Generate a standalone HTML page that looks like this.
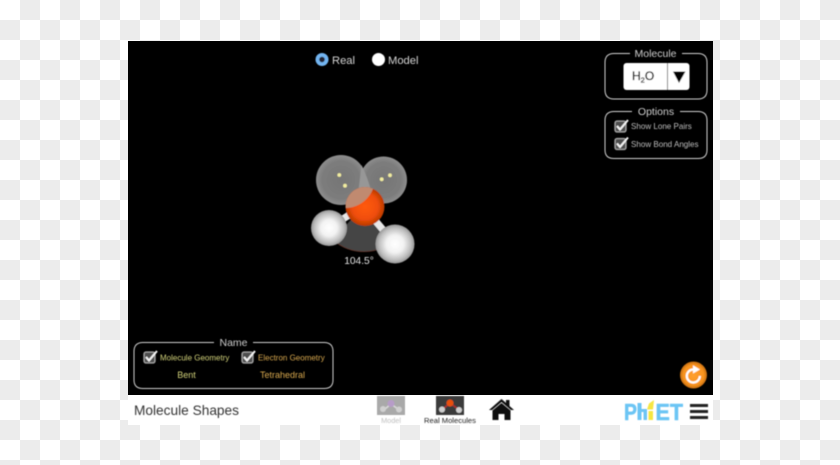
<!DOCTYPE html>
<html><head><meta charset="utf-8">
<style>
html,body{margin:0;padding:0;width:840px;height:465px;overflow:hidden;background:#fff}
svg{display:block;position:absolute;left:0;top:0}
text{font-family:"Liberation Sans",sans-serif}
</style></head>
<body>
<svg width="840" height="465" viewBox="0 0 840 465" xmlns="http://www.w3.org/2000/svg">
<defs>
<pattern id="ck" width="40" height="40" patternUnits="userSpaceOnUse">
<rect width="40" height="40" fill="#fff"/>
<rect x="20" y="0" width="20" height="20" fill="#ececec"/>
<rect x="0" y="20" width="20" height="20" fill="#ececec"/>
</pattern>
<filter id="b" x="-5%" y="-5%" width="110%" height="110%"><feGaussianBlur stdDeviation="0.45"/></filter>
<radialGradient id="h" cx="50%" cy="50%" r="50%"><stop offset="0" stop-color="#fff"/><stop offset=".45" stop-color="#f2f2f2"/><stop offset=".82" stop-color="#bdbdbd"/><stop offset="1" stop-color="#969696"/></radialGradient>
<radialGradient id="o" cx="50%" cy="50%" r="50%"><stop offset="0" stop-color="#ff5a0a"/><stop offset=".65" stop-color="#f04e08"/><stop offset="1" stop-color="#b83a04"/></radialGradient>
<radialGradient id="lp" cx="50%" cy="50%" r="50%"><stop offset="0" stop-color="#767676"/><stop offset=".75" stop-color="#7c7c7c"/><stop offset="1" stop-color="#8e8e8e"/></radialGradient>
<radialGradient id="re" cx="50%" cy="50%" r="50%"><stop offset="0" stop-color="#ffa030"/><stop offset=".75" stop-color="#f7931e"/><stop offset="1" stop-color="#c46c10"/></radialGradient>
<clipPath id="tan"><circle cx="345" cy="178" r="30"/></clipPath>
</defs>
<rect width="840" height="465" fill="url(#ck)"/>
<rect x="128" y="41" width="585" height="354" fill="#000"/>
<rect x="128" y="395" width="585" height="30" fill="#fff"/>
<g filter="url(#b)">
<!-- radio -->
<circle cx="322" cy="59.5" r="6.5" fill="#72b4f0"/><circle cx="322" cy="59.5" r="2.8" fill="#223"/>
<text x="332" y="64" font-size="11.2" fill="#d6d6d6">Real</text>
<circle cx="378.5" cy="59.5" r="6.5" fill="#fff"/>
<text x="388" y="64" font-size="11.2" fill="#d6d6d6">Model</text>

<!-- molecule -->
<path d="M363 206 L333 240 A47 47 0 0 0 395 240 Z" fill="#454545"/>
<path d="M333 240 A47 47 0 0 0 395 240" fill="none" stroke="#6a3528" stroke-width=".7"/>
<circle cx="383.500" cy="180" r="23.500" fill="url(#lp)"/>
<circle cx="341" cy="180" r="25" fill="url(#lp)"/>
<path d="M361.500 165 Q360 178 358 194 L372 194 Q368 178 361.500 165Z" fill="#979797"/>
<line x1="363" y1="206" x2="329" y2="228" stroke="#e8e8e8" stroke-width="7"/>
<line x1="363" y1="206" x2="395" y2="244" stroke="#e8e8e8" stroke-width="7"/>
<circle cx="329" cy="228" r="18" fill="url(#h)"/>
<circle cx="395" cy="244" r="19.500" fill="url(#h)"/>
<circle cx="365" cy="206.500" r="19.500" fill="url(#o)"/>
<circle cx="365" cy="206.500" r="19.500" fill="#c08a70" clip-path="url(#tan)"/>
<circle cx="339.300" cy="175" r="1.900" fill="#f2eda0"/>
<circle cx="345" cy="185.700" r="1.900" fill="#f2eda0"/>
<circle cx="381.700" cy="179.300" r="1.900" fill="#f2eda0"/>
<circle cx="390" cy="175.300" r="1.900" fill="#f2eda0"/>
<text x="359" y="264" font-size="10.200" fill="#e4e4e4" text-anchor="middle">104.5°</text>

<!-- Molecule panel -->
<path d="M630 53.500 H614 Q605 53.500 605 62.500 V90 Q605 99 614 99 H698 Q707 99 707 90 V62.500 Q707 53.500 698 53.500 H682" fill="none" stroke="#d0d0d0" stroke-width="1"/>
<text x="655.500" y="57" font-size="10.500" fill="#cfcfcf" text-anchor="middle">Molecule</text>
<rect x="623.500" y="63" width="66" height="27" rx="3" fill="#fff"/>
<line x1="667.500" y1="63" x2="667.500" y2="90" stroke="#777" stroke-width="1"/>
<text x="632" y="80" font-size="12" fill="#000" stroke="#000" stroke-width=".25">H<tspan font-size="7.500" dy="2.500">2</tspan><tspan dy="-2.500">O</tspan></text>
<path d="M673 71.500 H685.500 L679 83 Z" fill="#000"/>

<!-- Options panel -->
<path d="M632 111.500 H614 Q605 111.500 605 120.500 V150 Q605 158.500 614 158.500 H698 Q707 158.500 707 150 V120.500 Q707 111.500 698 111.500 H680" fill="none" stroke="#d0d0d0" stroke-width="1"/>
<text x="656" y="115" font-size="10.500" fill="#cfcfcf" text-anchor="middle">Options</text>
<rect x="615" y="121" width="11" height="11" rx="2" fill="#4d4d4d" stroke="#a8a8a8" stroke-width="1.300"/>
<path d="M617 126 L620 129.500 L628 120" fill="none" stroke="#f4f4f4" stroke-width="2"/>
<text x="631" y="129" font-size="8.050" fill="#bdbdbd">Show Lone Pairs</text>
<rect x="615" y="138.500" width="11" height="11" rx="2" fill="#4d4d4d" stroke="#a8a8a8" stroke-width="1.300"/>
<path d="M617 143.500 L620 147 L628 137.500" fill="none" stroke="#f4f4f4" stroke-width="2"/>
<text x="631" y="147" font-size="8.050" fill="#bdbdbd">Show Bond Angles</text>

<!-- Name panel -->
<path d="M214 342.500 H143 Q134 342.500 134 351.500 V380 Q134 388.500 143 388.500 H324 Q333 388.500 333 380 V351.500 Q333 342.500 324 342.500 H253" fill="none" stroke="#cfcfcf" stroke-width="1"/>
<text x="233.500" y="346" font-size="10.500" fill="#cfcfcf" text-anchor="middle">Name</text>
<rect x="144" y="352" width="11" height="11" rx="2" fill="#4d4d4d" stroke="#a8a8a8" stroke-width="1.300"/>
<path d="M146 357 L149 360.500 L157 351" fill="none" stroke="#f4f4f4" stroke-width="2"/>
<text x="160" y="360.500" font-size="8" fill="#d2d27a">Molecule Geometry</text>
<rect x="242" y="352" width="11" height="11" rx="2" fill="#4d4d4d" stroke="#a8a8a8" stroke-width="1.300"/>
<path d="M244 357 L247 360.500 L255 351" fill="none" stroke="#f4f4f4" stroke-width="2"/>
<text x="258" y="360.500" font-size="8" fill="#d9a94f">Electron Geometry</text>
<text x="186.500" y="378" font-size="9" fill="#d2d27a" text-anchor="middle">Bent</text>
<text x="282.500" y="378" font-size="9" fill="#d9a94f" text-anchor="middle">Tetrahedral</text>

<!-- reset -->
<circle cx="693.500" cy="375" r="13.500" fill="url(#re)"/>
<path d="M699.800 376 A6.500 6.500 0 1 1 693.500 369.500" fill="none" stroke="#fff" stroke-width="2.200"/>
<path d="M693 365.300 L693 373.500 L700 369.500 Z" fill="#fff"/>

<!-- nav bar -->
<text x="134" y="415" font-size="13.700" fill="#333">Molecule Shapes</text>
<rect x="377" y="396" width="28" height="19" fill="#a9a9a9"/>
<path d="M385 409 L391 404 L398 409" fill="none" stroke="#d8d8d8" stroke-width="1.500"/>
<circle cx="391" cy="403.500" r="3.500" fill="#b79cc8"/>
<circle cx="383" cy="409" r="3" fill="#d0d0d0"/><circle cx="399" cy="409.500" r="3" fill="#d0d0d0"/>
<text x="391" y="423" font-size="7.300" fill="#c0c0c0" text-anchor="middle">Model</text>
<rect x="436" y="396" width="28" height="19" fill="#3a3a3a"/>
<path d="M443 409 L450 403 L458 409" fill="none" stroke="#a33" stroke-width="1.500"/>
<circle cx="450" cy="403" r="3.500" fill="#e8500f"/>
<circle cx="442" cy="409.500" r="3" fill="#cfcfcf"/><circle cx="459" cy="410" r="3" fill="#cfcfcf"/>
<text x="450" y="423" font-size="7.600" fill="#222" text-anchor="middle">Real Molecules</text>
<!-- home -->
<path d="M489 410 L501.500 399 L514 410 L511 410 L501.500 402 L492 410 Z" fill="#111"/>
<path d="M492.500 410.500 L501.500 403 L510.500 410.500 V420 H504.500 V414 H498.500 V420 H492.500 Z" fill="#111"/>
<rect x="506" y="400" width="3.500" height="6" fill="#111"/>

<!-- PhET logo -->
<text x="624" y="420" font-size="23.500" font-weight="bold" fill="#6cc5f4" stroke="#6cc5f4" stroke-width=".5" textLength="13" lengthAdjust="spacingAndGlyphs">P</text>
<path d="M637.500 403 h4 v6 h5.500 v11 h-3.500 v-8 h-2 v8 h-4z" fill="#6cc5f4"/>
<path d="M648.500 411 h4.500 v9 h-4.500z" fill="#f5e642"/>
<path d="M647 409.500 L649 403.500 L654 400 L653 409.500 Z" fill="#f5e642"/>
<text x="655.500" y="420" font-size="23.500" font-weight="bold" fill="#6cc5f4" stroke="#6cc5f4" stroke-width=".5" textLength="27.500" lengthAdjust="spacingAndGlyphs">ET</text>
<!-- hamburger -->
<rect x="690" y="404" width="18" height="3" fill="#222"/>
<rect x="690" y="410" width="18" height="3" fill="#222"/>
<rect x="690" y="416" width="18" height="3" fill="#222"/>
</g>
</svg>
</body></html>
